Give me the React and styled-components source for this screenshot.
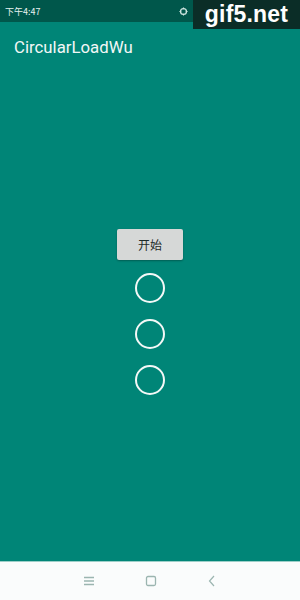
import React from "react";
import styled, { createGlobalStyle } from "styled-components";

const Global = createGlobalStyle`
  html, body { margin: 0; padding: 0; }
  body { font-family: Roboto, "Noto Sans", "Noto Sans CJK SC", sans-serif; }
  #root { height: 600px; }
`;

const Screen = styled.div`
  position: relative;
  width: 300px;
  height: 600px;
  display: flex;
  flex-direction: column;
  background: #008577;
  overflow: hidden;
`;

const StatusBar = styled.div`
  height: 22px;
  background: #00574b;
  display: flex;
  align-items: center;
  justify-content: space-between;
  padding: 0 8px 0 5px;
  color: #e6f2ef;
  font-size: 9px;
  font-family: "Noto Sans CJK SC", sans-serif;
`;

const StatusIcons = styled.div`
  display: flex;
  align-items: center;
  gap: 4px;
  padding-right: 104px;
`;

const AppBar = styled.div`
  height: 56px;
  display: flex;
  align-items: center;
  padding: 0 14px;
  color: #f2f7f6;
  font-size: 16.8px;
  font-weight: 400;
  padding-bottom: 6px;
  box-sizing: border-box;
`;

const Content = styled.div`
  flex: 1;
  display: flex;
  flex-direction: column;
  align-items: center;
  padding-top: 151px;
`;

const Button = styled.button`
  width: 66px;
  height: 31px;
  border: none;
  border-radius: 2px;
  background: #d6d8d7;
  box-shadow: 0 1px 2px rgba(0, 0, 0, 0.3);
  font-family: "Noto Sans CJK SC", sans-serif;
  font-size: 12px;
  color: #1d2b28;
  margin-bottom: 13px;
  padding: 0;
`;

const Ring = styled.div`
  width: 26px;
  height: 26px;
  border: 2px solid #f4f8f7;
  border-radius: 50%;
  margin-bottom: 16px;
`;

const NavBar = styled.div`
  height: 39px;
  background: #fafcfc;
  border-top: 1px solid #9ccfc8;
  display: flex;
  align-items: center;
  justify-content: center;
  gap: 50px;
  box-sizing: border-box;
`;

const Watermark = styled.div`
  position: absolute;
  top: 0;
  right: 0;
  width: 107px;
  height: 29px;
  background: #0b2d27;
  color: #ffffff;
  font-family: "Liberation Sans", Arial, sans-serif;
  font-weight: bold;
  font-size: 23px;
  display: flex;
  align-items: center;
  justify-content: center;
  letter-spacing: 0.2px;
`;

const NavIcon = styled.svg`
  display: block;
`;

export default function App() {
  return (
    <>
      <Global />
      <Screen>
        <StatusBar>
          <span>下午4:47</span>
          <StatusIcons>
            <svg width="9" height="9" viewBox="0 0 10 10">
              <circle cx="5" cy="5" r="3.3" fill="none" stroke="#cfe6e1" strokeWidth="1.4" />
              <path d="M5 0.5v2M5 7.5v2M0.5 5h2M7.5 5h2" stroke="#cfe6e1" strokeWidth="1.2" />
            </svg>
          </StatusIcons>
        </StatusBar>
        <AppBar>CircularLoadWu</AppBar>
        <Content>
          <Button>开始</Button>
          <Ring />
          <Ring />
          <Ring />
        </Content>
        <NavBar>
          <NavIcon width="12" height="10" viewBox="0 0 12 10">
            <path d="M1 1.5h10M1 5h10M1 8.5h10" stroke="#9bb5b0" strokeWidth="1.3" />
          </NavIcon>
          <NavIcon width="12" height="12" viewBox="0 0 12 12">
            <rect x="1.5" y="1.5" width="9" height="9" rx="1.5" fill="none" stroke="#9bb5b0" strokeWidth="1.3" />
          </NavIcon>
          <NavIcon width="10" height="12" viewBox="0 0 10 12">
            <path d="M7 1L2.5 6L7 11" fill="none" stroke="#9bb5b0" strokeWidth="1.2" />
          </NavIcon>
        </NavBar>
        <Watermark>gif5.net</Watermark>
      </Screen>
    </>
  );
}
